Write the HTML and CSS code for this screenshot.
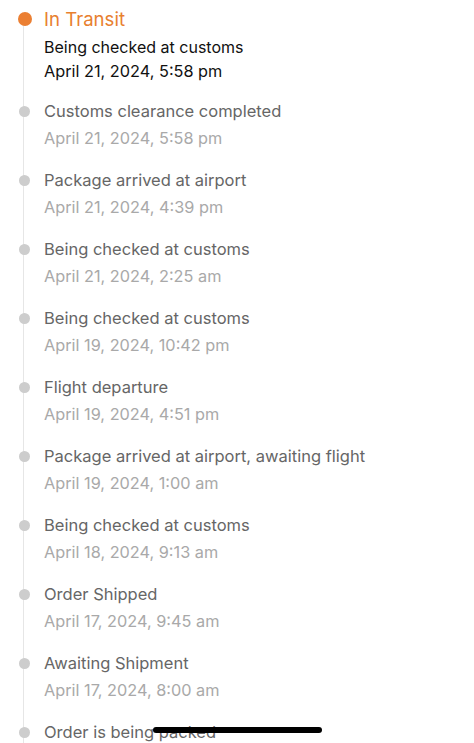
FILE: index.html
```html
<!DOCTYPE html>
<html lang="en">
<head>
    <meta charset="UTF-8">
    <meta name="viewport" content="width=device-width, initial-scale=1.0">
    <title>Tracking</title>
    <link rel="stylesheet" href="styles.css">
</head>
<body>

    <!-- Tracking Timeline -->
    <ul class="timeline">
        <li class="step current">
            <span class="dot"></span>
            <div class="info">
                <p class="status">In Transit</p>
                <p class="title">Being checked at customs</p>
                <p class="date">April 21, 2024, 5:58 pm</p>
            </div>
        </li>
        <li class="step">
            <span class="dot"></span>
            <div class="info">
                <p class="title">Customs clearance completed</p>
                <p class="date">April 21, 2024, 5:58 pm</p>
            </div>
        </li>
        <li class="step">
            <span class="dot"></span>
            <div class="info">
                <p class="title">Package arrived at airport</p>
                <p class="date">April 21, 2024, 4:39 pm</p>
            </div>
        </li>
        <li class="step">
            <span class="dot"></span>
            <div class="info">
                <p class="title">Being checked at customs</p>
                <p class="date">April 21, 2024, 2:25 am</p>
            </div>
        </li>
        <li class="step">
            <span class="dot"></span>
            <div class="info">
                <p class="title">Being checked at customs</p>
                <p class="date">April 19, 2024, 10:42 pm</p>
            </div>
        </li>
        <li class="step">
            <span class="dot"></span>
            <div class="info">
                <p class="title">Flight departure</p>
                <p class="date">April 19, 2024, 4:51 pm</p>
            </div>
        </li>
        <li class="step">
            <span class="dot"></span>
            <div class="info">
                <p class="title">Package arrived at airport, awaiting flight</p>
                <p class="date">April 19, 2024, 1:00 am</p>
            </div>
        </li>
        <li class="step">
            <span class="dot"></span>
            <div class="info">
                <p class="title">Being checked at customs</p>
                <p class="date">April 18, 2024, 9:13 am</p>
            </div>
        </li>
        <li class="step">
            <span class="dot"></span>
            <div class="info">
                <p class="title">Order Shipped</p>
                <p class="date">April 17, 2024, 9:45 am</p>
            </div>
        </li>
        <li class="step">
            <span class="dot"></span>
            <div class="info">
                <p class="title">Awaiting Shipment</p>
                <p class="date">April 17, 2024, 8:00 am</p>
            </div>
        </li>
        <li class="step last">
            <span class="dot"></span>
            <div class="info">
                <p class="title">Order is being packed</p>
            </div>
        </li>
    </ul>

    <!-- Home Indicator -->
    <div class="home-bar"></div>

</body>
</html>
```

FILE: styles.css
```css
/* Common Styles */
body {
    font-family: 'Inter', 'Liberation Sans', sans-serif;
    margin: 0;
    height: 743px;
    overflow: hidden;
    background-color: #fff;
}

p {
    margin: 0;
}

/* Timeline */
.timeline {
    list-style: none;
    margin: 0;
    padding: 4px 0 0 0;
    position: relative;
    height: 739px;
    overflow: hidden;
}

.timeline::before {
    content: "";
    position: absolute;
    left: 23px;
    top: 20px;
    bottom: 0;
    width: 1px;
    background-color: #e6e6e6;
}

.step {
    display: flex;
    padding-bottom: 15px;
}

.dot {
    flex: 0 0 44px;
    display: flex;
    justify-content: center;
    align-items: flex-start;
    padding-top: 8px;
    position: relative;
}

.dot::after {
    content: "";
    width: 11px;
    height: 11px;
    border-radius: 50%;
    background-color: #cdcdcd;
    margin-left: 4px;
}

.title {
    font-size: 16.5px;
    line-height: 27px;
    color: #666;
}

.date {
    font-size: 16.3px;
    line-height: 27px;
    color: #a9a9a9;
}

/* Current Step */
.current {
    padding-bottom: 16px;
}

.current .dot::after {
    width: 14px;
    height: 14px;
    margin-left: 5px;
    background-color: #eb7f32;
}

.status {
    font-size: 18.6px;
    line-height: 30px;
    color: #e8802f;
}

.current .title {
    font-size: 16px;
    line-height: 26px;
    color: #111;
}

.current .date {
    line-height: 22px;
    color: #111;
}

/* Home Indicator */
.home-bar {
    position: absolute;
    left: 153px;
    top: 727px;
    width: 169px;
    height: 6px;
    border-radius: 3px;
    background-color: #000;
}
```
